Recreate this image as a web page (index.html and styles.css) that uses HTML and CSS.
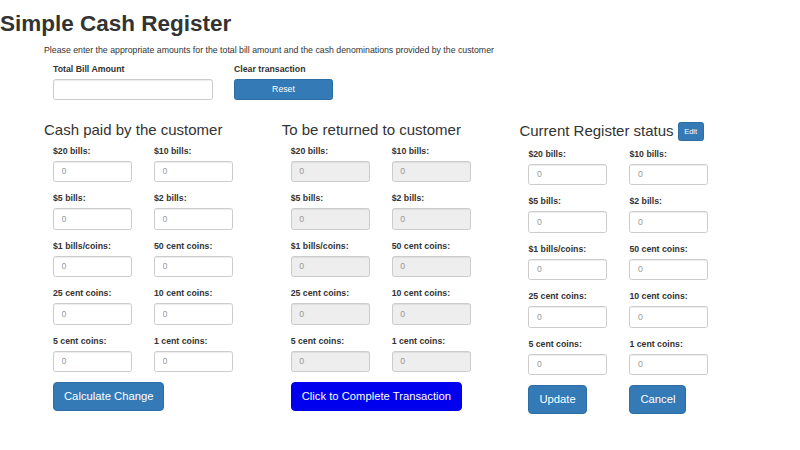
FILE: index.html
```html
<!DOCTYPE html>
<html>
<head>
<meta charset="utf-8">
<title>Simple Cash Register</title>
<link rel="stylesheet" href="styles.css">
</head>
<body>
<h1 class="title">Simple Cash Register</h1>
<div class="main">
  <p class="intro">Please enter the appropriate amounts for the total bill amount and the cash denominations provided by the customer</p>
  <div class="top-form">
    <div class="group group-bill">
      <label class="lbl">Total Bill Amount</label>
      <input class="field field-wide" type="text">
    </div>
    <div class="group">
      <label class="lbl">Clear transaction</label>
      <button class="btn btn-primary btn-reset">Reset</button>
    </div>
  </div>

  <div class="columns">
    <section class="col">
      <h3 class="col-title">Cash paid by the customer</h3>
      <div class="fields">
        <div class="fg"><label class="lbl">$20 bills:</label><input class="field" placeholder="0"></div>
        <div class="fg"><label class="lbl">$10 bills:</label><input class="field" placeholder="0"></div>
        <div class="fg"><label class="lbl">$5 bills:</label><input class="field" placeholder="0"></div>
        <div class="fg"><label class="lbl">$2 bills:</label><input class="field" placeholder="0"></div>
        <div class="fg"><label class="lbl">$1 bills/coins:</label><input class="field" placeholder="0"></div>
        <div class="fg"><label class="lbl">50 cent coins:</label><input class="field" placeholder="0"></div>
        <div class="fg"><label class="lbl">25 cent coins:</label><input class="field" placeholder="0"></div>
        <div class="fg"><label class="lbl">10 cent coins:</label><input class="field" placeholder="0"></div>
        <div class="fg"><label class="lbl">5 cent coins:</label><input class="field" placeholder="0"></div>
        <div class="fg"><label class="lbl">1 cent coins:</label><input class="field" placeholder="0"></div>
      </div>
      <div class="actions">
        <button class="btn btn-primary btn-lg">Calculate Change</button>
      </div>
    </section>

    <section class="col">
      <h3 class="col-title">To be returned to customer</h3>
      <div class="fields">
        <div class="fg"><label class="lbl">$20 bills:</label><input class="field" placeholder="0" disabled></div>
        <div class="fg"><label class="lbl">$10 bills:</label><input class="field" placeholder="0" disabled></div>
        <div class="fg"><label class="lbl">$5 bills:</label><input class="field" placeholder="0" disabled></div>
        <div class="fg"><label class="lbl">$2 bills:</label><input class="field" placeholder="0" disabled></div>
        <div class="fg"><label class="lbl">$1 bills/coins:</label><input class="field" placeholder="0" disabled></div>
        <div class="fg"><label class="lbl">50 cent coins:</label><input class="field" placeholder="0" disabled></div>
        <div class="fg"><label class="lbl">25 cent coins:</label><input class="field" placeholder="0" disabled></div>
        <div class="fg"><label class="lbl">10 cent coins:</label><input class="field" placeholder="0" disabled></div>
        <div class="fg"><label class="lbl">5 cent coins:</label><input class="field" placeholder="0" disabled></div>
        <div class="fg"><label class="lbl">1 cent coins:</label><input class="field" placeholder="0" disabled></div>
      </div>
      <div class="actions">
        <button class="btn btn-blue btn-lg">Click to Complete Transaction</button>
      </div>
    </section>

    <section class="col">
      <div class="col-head">
        <h3 class="col-title col-title-inline">Current Register status</h3>
        <button class="btn btn-primary btn-xs">Edit</button>
      </div>
      <div class="fields">
        <div class="fg"><label class="lbl">$20 bills:</label><input class="field" placeholder="0"></div>
        <div class="fg"><label class="lbl">$10 bills:</label><input class="field" placeholder="0"></div>
        <div class="fg"><label class="lbl">$5 bills:</label><input class="field" placeholder="0"></div>
        <div class="fg"><label class="lbl">$2 bills:</label><input class="field" placeholder="0"></div>
        <div class="fg"><label class="lbl">$1 bills/coins:</label><input class="field" placeholder="0"></div>
        <div class="fg"><label class="lbl">50 cent coins:</label><input class="field" placeholder="0"></div>
        <div class="fg"><label class="lbl">25 cent coins:</label><input class="field" placeholder="0"></div>
        <div class="fg"><label class="lbl">10 cent coins:</label><input class="field" placeholder="0"></div>
        <div class="fg"><label class="lbl">5 cent coins:</label><input class="field" placeholder="0"></div>
        <div class="fg"><label class="lbl">1 cent coins:</label><input class="field" placeholder="0"></div>
      </div>
      <div class="actions actions-split">
        <button class="btn btn-primary btn-lg">Update</button>
        <button class="btn btn-primary btn-lg">Cancel</button>
      </div>
    </section>
  </div>
</div>
</body>
</html>
```

FILE: styles.css
```css
* { box-sizing: border-box; }

body {
  margin: 0;
  font-family: "Liberation Sans", Arial, sans-serif;
  font-size: 8.75px;
  color: #333;
  background: #fff;
}

.title {
  margin: 11px 0 0;
  font-size: 22.5px;
  line-height: 26px;
  font-weight: bold;
}

.main {
  padding-left: 44px;
}

.intro {
  margin: 6.5px 0 0;
  line-height: 13px;
}

.top-form {
  display: flex;
  gap: 21px;
  margin-top: 6px;
  padding-left: 9px;
}

.group {
  display: flex;
  flex-direction: column;
  align-items: flex-start;
}

.lbl {
  display: block;
  font-weight: bold;
  line-height: 13px;
  margin-bottom: 3px;
}

.field {
  display: block;
  width: 79px;
  height: 21.5px;
  padding: 0 7.5px;
  border: 1px solid #ccc;
  border-radius: 2.5px;
  font-family: inherit;
  font-size: 8.75px;
  color: #555;
  background: #fff;
  box-shadow: inset 0 1px 1px rgba(0,0,0,.075);
}

.field::placeholder { color: #999; }

.field:disabled {
  background: #eee;
}

.field-wide { width: 160px; }

.btn {
  font-family: inherit;
  border: 1px solid transparent;
  border-radius: 2.5px;
  color: #fff;
  cursor: pointer;
  padding: 0;
}

.btn-primary {
  background: #337ab7;
  border-color: #2e6da4;
}

.btn-blue {
  background: #0000ee;
  border-color: #0000ee;
}

.btn-reset {
  width: 99px;
  height: 21.5px;
  font-size: 8.75px;
}

.btn-lg {
  height: 28.5px;
  padding: 0 10px;
  font-size: 11.25px;
  border-radius: 4px;
}

.btn-xs {
  width: 26px;
  height: 19.5px;
  font-size: 7.5px;
  margin-left: 4px;
}

.columns {
  display: flex;
  margin-top: 21.75px;
}

.col {
  width: 237.7px;
  flex: none;
}

.col-title {
  margin: 0 0 6.25px;
  font-size: 15px;
  line-height: 16.5px;
  font-weight: normal;
}

.col-head {
  display: flex;
  align-items: center;
  height: 19.5px;
  margin-bottom: 6.25px;
}

.col-title-inline { margin: 0; }

.fields {
  display: grid;
  grid-template-columns: 79px 79px;
  column-gap: 22px;
  padding-left: 9px;
}

.fg {
  margin-bottom: 10px;
}

.actions {
  display: flex;
  padding-left: 9px;
}

.actions-split {
  display: grid;
  grid-template-columns: 79px 79px;
  column-gap: 22px;
  justify-items: start;
}
```
